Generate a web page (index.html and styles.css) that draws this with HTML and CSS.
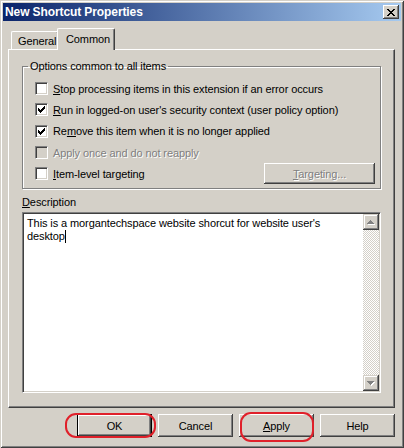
FILE: index.html
```html
<!DOCTYPE html>
<html>
<head>
<meta charset="utf-8">
<link rel="stylesheet" href="styles.css">
</head>
<body>
<div class="window">
  <div class="titlebar">
    <span class="title">New Shortcut Properties</span>
    <span class="close"><svg width="8" height="7" viewBox="0 0 8 7"><path fill="#000" d="M0 0h2v1H0zM6 0h2v1H6zM1 1h2v1H1zM5 1h2v1H5zM2 2h4v1H2zM3 3h2v1H3zM2 4h4v1H2zM1 5h2v1H1zM5 5h2v1H5zM0 6h2v1H0zM6 6h2v1H6z"/></svg></span>
  </div>
  <div class="body">
    <div class="tabs">
      <div class="tab">General</div>
      <div class="tab active">Common</div>
    </div>
    <div class="panel">
      <fieldset class="group">
        <legend>Options common to all items</legend>
        <div class="row"><span class="cb"></span><span class="lbl"><u>S</u>top processing items in this extension if an error occurs</span></div>
        <div class="row"><span class="cb"><svg width="7" height="7" viewBox="0 0 7 7"><path fill="#000" d="M0 2h1v3H0zM1 3h1v3H1zM2 4h1v3H2zM3 3h1v3H3zM4 2h1v3H4zM5 1h1v3H5zM6 0h1v3H6z"/></svg></span><span class="lbl"><u>R</u>un in logged-on user's security context (user policy option)</span></div>
        <div class="row"><span class="cb"><svg width="7" height="7" viewBox="0 0 7 7"><path fill="#000" d="M0 2h1v3H0zM1 3h1v3H1zM2 4h1v3H2zM3 3h1v3H3zM4 2h1v3H4zM5 1h1v3H5zM6 0h1v3H6z"/></svg></span><span class="lbl">Re<u>m</u>ove this item when it is no longer applied</span></div>
        <div class="row"><span class="cb disabled"></span><span class="lbl dis">Apply once and do not reapply</span></div>
        <div class="row"><span class="cb"></span><span class="lbl"><u>I</u>tem-level targeting</span><span class="btn small"><span class="dis"><u>T</u>argeting...</span></span></div>
      </fieldset>
      <div class="desc-label"><u>D</u>escription</div>
      <div class="textbox">
        <div class="text">This is a morgantechspace website shorcut for website user's<br>desktop<span class="caret"></span></div>
        <div class="scrollbar">
          <span class="sbtn"><svg width="8" height="5" viewBox="0 0 8 5"><path fill="#fff" d="M4 1h1v1H4zM3 2h3v1H3zM2 3h5v1H2zM1 4h7v1H1z"/><path fill="#808080" d="M3 0h1v1H3zM2 1h3v1H2zM1 2h5v1H1zM0 3h7v1H0z"/></svg></span>
          <span class="track"></span>
          <span class="sbtn"><svg width="8" height="5" viewBox="0 0 8 5"><path fill="#fff" d="M1 1h7v1H1zM2 2h5v1H2zM3 3h3v1H3zM4 4h1v1H4z"/><path fill="#808080" d="M0 0h7v1H0zM1 1h5v1H1zM2 2h3v1H2zM3 3h1v1H3z"/></svg></span>
        </div>
      </div>
    </div>
    <div class="buttons">
      <span class="btn default">OK</span>
      <span class="btn">Cancel</span>
      <span class="btn"><u>A</u>pply</span>
      <span class="btn">Help</span>
    </div>
  </div>
  <span class="ring ring-ok"></span>
  <span class="ring ring-apply"></span>
</div>
</body>
</html>
```
FILE: styles.css
```css
* { box-sizing: border-box; }
html, body { margin: 0; padding: 0; }
body {
  width: 404px;
  height: 448px;
  overflow: hidden;
  background: #d4d0c8;
  font-family: "Liberation Sans", Arial, sans-serif;
  font-size: 11px;
  letter-spacing: -0.1px;
  color: #000;
}
.window {
  position: relative;
  width: 404px;
  height: 448px;
  padding: 3px;
  background: #d4d0c8;
  box-shadow: inset 1px 1px #d4d0c8, inset -1px -1px #404040, inset 2px 2px #fff, inset -2px -2px #808080;
  display: flex;
  flex-direction: column;
}
.titlebar {
  height: 18px;
  flex: none;
  display: flex;
  align-items: center;
  padding: 0 2px 0 2px;
  background: linear-gradient(to right, #0a246a, #a6caf0);
  color: #fff;
  font-weight: bold;
  font-size: 12px;
}
.close {
  margin-left: auto;
  width: 16px;
  height: 14px;
  display: flex;
  align-items: center;
  justify-content: center;
  background: #d4d0c8;
  box-shadow: inset -1px -1px #404040, inset 1px 1px #fff, inset -2px -2px #808080, inset 2px 2px #d4d0c8;
}
.body {
  flex: 1;
  display: flex;
  flex-direction: column;
  padding: 0 6px 0 5px;
}
.tabs {
  margin-top: 7px;
  height: 21px;
  display: flex;
  align-items: flex-end;
  padding-left: 3px;
}
.tab {
  height: 18px;
  width: 48px;
  padding-left: 6px;
  display: flex;
  align-items: center;
  border-top: 1px solid #fff;
  border-left: 1px solid #fff;
  border-right: 1px solid #404040;
  border-radius: 2px 2px 0 0;
  box-shadow: inset -1px 0 #808080;
  background: #d4d0c8;
}
.tab.active {
  position: relative;
  z-index: 1;
  width: 58px;
  height: 22px;
  margin-left: -2px;
  margin-bottom: -1px;
  padding-left: 8px;
  padding-bottom: 2px;
}
.panel {
  height: 359px;
  display: flex;
  flex-direction: column;
  padding: 10px 13px 14px 13px;
  border-top: 1px solid #fff;
  border-left: 1px solid #fff;
  border-right: 1px solid #404040;
  border-bottom: 1px solid #404040;
  box-shadow: inset -1px -1px #808080;
}
.group {
  margin: 0;
  padding: 5px 5px 4px 12px;
  border: 1px solid #808080;
  box-shadow: inset 1px 1px #fff, 1px 1px #fff;
}
.group legend {
  margin-left: -7px;
  padding: 0 2px;
  line-height: 13px;
}
.row {
  height: 21.3px;
  display: flex;
  align-items: center;
}
.cb {
  width: 13px;
  height: 13px;
  flex: none;
  display: flex;
  align-items: center;
  justify-content: center;
  background: #fff;
  border-top: 1px solid #808080;
  border-left: 1px solid #808080;
  border-right: 1px solid #fff;
  border-bottom: 1px solid #fff;
  box-shadow: inset 1px 1px #404040, inset -1px -1px #d4d0c8;
}
.cb.disabled { background: #d4d0c8; }
.lbl { margin-left: 5px; white-space: nowrap; }
.dis { color: #808080; text-shadow: 1px 1px #fff; }
.btn {
  width: 75px;
  height: 23px;
  display: flex;
  align-items: center;
  justify-content: center;
  background: #d4d0c8;
  box-shadow: inset -1px -1px #404040, inset 1px 1px #fff, inset -2px -2px #808080, inset 2px 2px #d4d0c8;
}
.btn.small {
  margin-left: auto;
  width: 111px;
  height: 21px;
}
.btn.default {
  border: 1px solid #000;
}
.desc-label {
  margin-top: 7px;
  line-height: 13px;
}
.textbox {
  margin-top: 3px;
  flex: 1;
  display: flex;
  background: #fff;
  border-top: 1px solid #808080;
  border-left: 1px solid #808080;
  border-right: 1px solid #fff;
  border-bottom: 1px solid #fff;
  box-shadow: inset 1px 1px #404040, inset -1px -1px #d4d0c8;
  padding: 1px;
}
.text {
  flex: 1;
  padding: 3px 3px 1px;
  line-height: 13px;
}
.caret {
  display: inline-block;
  width: 1px;
  height: 13px;
  background: #000;
  vertical-align: -3px;
}
.scrollbar {
  width: 16px;
  display: flex;
  flex-direction: column;
}
.sbtn {
  width: 16px;
  height: 16px;
  flex: none;
  display: flex;
  align-items: center;
  justify-content: center;
  background: #d4d0c8;
  box-shadow: inset -1px -1px #404040, inset 1px 1px #d4d0c8, inset -2px -2px #808080, inset 2px 2px #fff;
}
.track {
  flex: 1;
  background: repeating-conic-gradient(#d4d0c8 0 25%, #fff 0 50%) 0 0 / 2px 2px;
}
.buttons {
  margin-top: 6px;
  display: flex;
  justify-content: flex-end;
  gap: 6px;
}
.ring {
  position: absolute;
  border: 2px solid #e0202a;
  border-radius: 11px;
}
.ring-ok { left: 65px; top: 413px; width: 91px; height: 25px; }
.ring-apply { left: 240px; top: 412px; width: 74px; height: 30px; }
```
